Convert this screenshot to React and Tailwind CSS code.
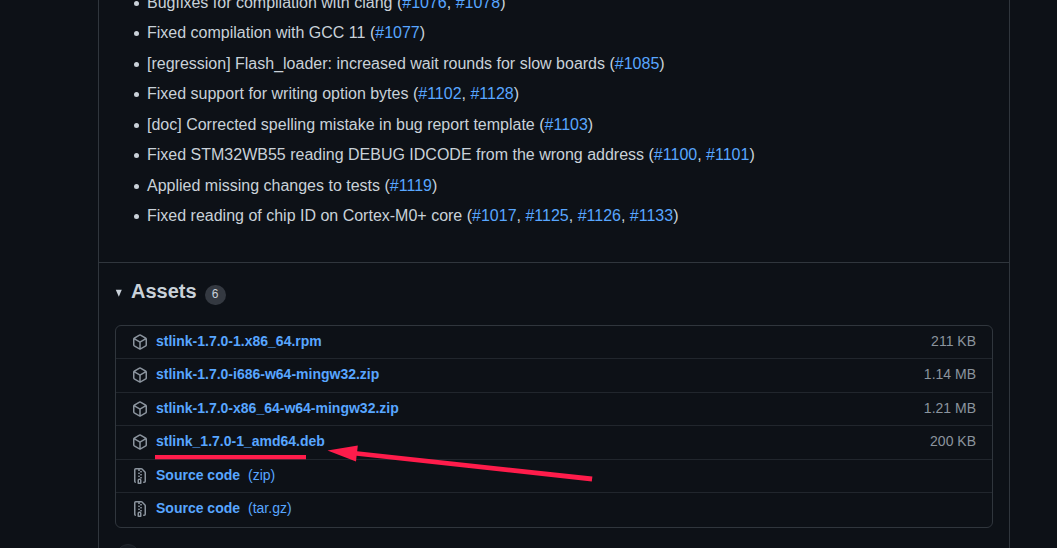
const PACKAGE =
  "M8.878.392a1.75 1.75 0 00-1.756 0l-5.25 3.045A1.75 1.75 0 001 4.951v6.098c0 .624.332 1.2.872 1.514l5.25 3.045a1.75 1.75 0 001.756 0l5.25-3.045c.54-.313.872-.89.872-1.514V4.951c0-.624-.332-1.2-.872-1.514L8.878.392zM7.875 1.69a.25.25 0 01.25 0l4.63 2.685L8 7.133 3.245 4.375l4.63-2.685zM2.5 5.677v5.372c0 .09.047.171.125.216l4.625 2.683V8.432L2.5 5.677zm6.25 8.271l4.625-2.683a.25.25 0 00.125-.216V5.677L8.75 8.432v5.516z";
const ZIP =
  "M3.5 1.75a.25.25 0 01.25-.25h3a.75.75 0 000 1.5h.5a.75.75 0 000-1.5h2.086a.25.25 0 01.177.073l2.914 2.914a.25.25 0 01.073.177v8.586a.25.25 0 01-.25.25h-.5a.75.75 0 000 1.5h.5A1.75 1.75 0 0014 13.25V4.664c0-.464-.184-.909-.513-1.237L10.573.513A1.75 1.75 0 009.336 0H3.75A1.75 1.75 0 002 1.75v11.5c0 .649.353 1.214.874 1.515a.75.75 0 10.752-1.298.25.25 0 01-.126-.217V1.75zM8.75 3a.75.75 0 000 1.5h.5a.75.75 0 000-1.5h-.5zM6 5.25a.75.75 0 01.75-.75h.5a.75.75 0 010 1.5h-.5A.75.75 0 016 5.25zm2 1.5A.75.75 0 018.75 6h.5a.75.75 0 010 1.5h-.5A.75.75 0 018 6.75zm-1.25.75a.75.75 0 000 1.5h.5a.75.75 0 000-1.5h-.5zM8 9.75A.75.75 0 018.75 9h.5a.75.75 0 010 1.5h-.5A.75.75 0 018 9.75zm-.75.75a1.75 1.75 0 00-1.75 1.75v3c0 .414.336.75.75.75h2.5a.75.75 0 00.75-.75v-3a1.75 1.75 0 00-1.75-1.75h-.5zM7 12.25a.25.25 0 01.25-.25h.5a.25.25 0 01.25.25v2.25H7v-2.25z";

const fixes = [
  ["Bugfixes for compilation with clang", [1076, 1078]],
  ["Fixed compilation with GCC 11", [1077]],
  ["[regression] Flash_loader: increased wait rounds for slow boards", [1085]],
  ["Fixed support for writing option bytes", [1102, 1128]],
  ["[doc] Corrected spelling mistake in bug report template", [1103]],
  ["Fixed STM32WB55 reading DEBUG IDCODE from the wrong address", [1100, 1101]],
  ["Applied missing changes to tests", [1119]],
  ["Fixed reading of chip ID on Cortex-M0+ core", [1017, 1125, 1126, 1133]],
];

const assets = [
  { name: "stlink-1.7.0-1.x86_64.rpm", size: "211 KB" },
  { name: "stlink-1.7.0-i686-w64-mingw32.zip", size: "1.14 MB" },
  { name: "stlink-1.7.0-x86_64-w64-mingw32.zip", size: "1.21 MB" },
  { name: "stlink_1.7.0-1_amd64.deb", size: "200 KB", marked: true },
  { name: "Source code", kind: "(zip)" },
  { name: "Source code", kind: "(tar.gz)" },
];

function Fix({ text, issues }) {
  return (
    <li className="flex items-center leading-[30px] even:pb-px">
      <span className="mr-2 size-[5px] shrink-0 rounded-full bg-[#c9d1d9]" />
      <span>
        {text} (
        {issues.map((n, i) => (
          <span key={n}>
            {i > 0 && ", "}
            <a href={`#${n}`} className="text-[#58a6ff] hover:underline">
              #{n}
            </a>
          </span>
        ))}
        )
      </span>
    </li>
  );
}

function Annotation() {
  return (
    <svg
      className="pointer-events-none absolute top-3 left-[38px] h-12 w-[442px]"
      viewBox="0 0 442 48"
      fill="#ff1c4b"
      aria-hidden="true"
    >
      <path d="M1 17h151v4.200H1z" />
      <path d="M173.500 12.500 203.800 7.500 203.200 13.300 438.400 38.500 437.800 43.500 202.600 17.800 202 23.500z" />
    </svg>
  );
}

function Asset({ name, size, kind, marked }) {
  return (
    <li className="relative flex items-center border-b border-[#21262d] px-4 pb-[2px] leading-[30px] last:border-b-0 last:pb-1 even:not-last:pb-[3px]">
      <svg viewBox="0 0 16 16" className="mt-px size-4 shrink-0 fill-[#8b949e]" aria-hidden="true">
        <path fillRule="evenodd" d={kind ? ZIP : PACKAGE} />
      </svg>
      <a href="#download" className="ml-2 text-[#58a6ff] hover:underline">
        <span className="font-bold">{name}</span>
        {kind && <span className="ml-2">{kind}</span>}
      </a>
      <span className="ml-auto text-[#8b949e]">{size}</span>
      {marked && <Annotation />}
    </li>
  );
}

export default function App() {
  return (
    <main className="flex h-screen flex-col overflow-hidden bg-[#0d1117] pr-[47px] pl-[98px] font-['Liberation_Sans',Arial,sans-serif] text-[#c9d1d9]">
      <article className="grow border-x border-[#30363d]">
        <ul className="-mt-3 pb-[30px] pl-[35px] text-base">
          {fixes.map(([text, issues]) => (
            <Fix key={text} text={text} issues={issues} />
          ))}
        </ul>
        <section className="border-t border-[#30363d] px-4 pt-3">
          <details open>
            <summary className="flex list-none items-center">
              <svg viewBox="0 0 8 8" className="mt-1 size-2 fill-[#c9d1d9]" aria-hidden="true">
                <path d="M.8 .8h6L3.800 7.800z" />
              </svg>
              <h2 className="ml-2 text-xl leading-8 font-bold">Assets</h2>
              <span className="mt-2 ml-2 flex h-5 w-[21px] items-center justify-center rounded-full bg-[#343941] pb-[2px] text-xs">
                6
              </span>
            </summary>
            <ul className="mt-[18px] rounded-md border border-[#30363d] text-sm">
              {assets.map((a) => (
                <Asset key={a.name + (a.kind || "")} {...a} />
              ))}
            </ul>
          </details>
          <button
            type="button"
            aria-label="Add reaction"
            className="mt-4 ml-px block size-6 rounded-full border border-[#21262d] bg-[#161b22]"
          />
        </section>
      </article>
    </main>
  );
}
